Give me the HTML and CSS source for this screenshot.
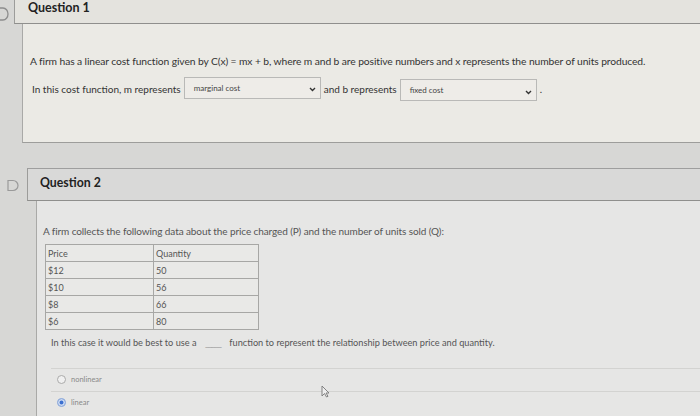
FILE: index.html
```html
<!DOCTYPE html>
<html lang="en">
<head>
<title>Quiz</title>
<meta charset="UTF-8">
<link rel="stylesheet" href="styles.css">
</head>
<body>
  <div class="question q1">
    <div class="flag flag1">
      <svg width="10" height="14" viewBox="0 0 10 14"><path d="M-4 1 H3 A5 6 0 0 1 3 13 H-4" fill="none" stroke="#8d8d8d" stroke-width="1.3"/></svg>
    </div>
    <div class="qbox">
      <div class="qhead">Question 1</div>
      <div class="qbody">
        <p class="qtext">A firm has a linear cost function given by C(x) = mx + b, where m and b are positive numbers and x represents the number of units produced.</p>
        <p class="qline">In this cost function, m represents
          <span class="select sel1">marginal cost
            <svg class="chev" width="7" height="5" viewBox="0 0 7 5"><path d="M1 1 L3.5 3.5 L6 1" fill="none" stroke="#333" stroke-width="1.4"/></svg>
          </span>
          and b represents
          <span class="select sel2">fixed cost
            <svg class="chev" width="7" height="5" viewBox="0 0 7 5"><path d="M1 1 L3.5 3.5 L6 1" fill="none" stroke="#333" stroke-width="1.4"/></svg>
          </span>.
        </p>
      </div>
    </div>
  </div>

  <div class="question q2">
    <div class="flag flag2">
      <svg width="13" height="13" viewBox="0 0 13 13"><path d="M1 1.5 H6 A5 5 0 0 1 6 11.5 H1 Z" fill="none" stroke="#9a9a9a" stroke-width="1.2"/></svg>
    </div>
    <div class="qbox">
      <div class="qhead head2">Question 2</div>
      <div class="qbody body2">
        <p class="qtext2">A firm collects the following data about the price charged (P) and the number of units sold (Q):</p>
        <table class="data">
          <tr><td>Price</td><td>Quantity</td></tr>
          <tr><td>$12</td><td>50</td></tr>
          <tr><td>$10</td><td>56</td></tr>
          <tr><td>$8</td><td>66</td></tr>
          <tr><td>$6</td><td>80</td></tr>
        </table>
        <p class="qtext3">In this case it would be best to use a <span class="blank">_____</span> function to represent the relationship between price and quantity.</p>
        <div class="answers">
          <div class="answer"><span class="radio"></span>nonlinear</div>
          <div class="answer"><span class="radio on"></span>linear</div>
        </div>
        <svg class="cursor" width="9" height="13" viewBox="0 0 9 13"><path d="M1 1 V11 L3.5 8.5 L5.5 12 L7 11.3 L5 8 H8 Z" fill="#eee" stroke="#777" stroke-width="0.9"/></svg>
      </div>
    </div>
  </div>
  <div class="bottom"></div>
</body>
</html>
```

FILE: styles.css
```css
body {
  margin: 0;
  background-color: #d7d7d5;
  font-family: Lato, "Open Sans", Arial, sans-serif;
  width: 700px;
  height: 416px;
  overflow: hidden;
}
p {
  margin: 0;
}
.question {
  display: flex;
}
.flag {
  flex: none;
}
.flag1 {
  width: 14px;
  padding-top: 5px;
}
.q2 {
  margin-top: 25px;
}
.flag2 {
  width: 20px;
  padding-left: 7px;
  padding-top: 8px;
}
.qbox {
  flex: 1;
}
/* header bars */
.qhead {
  height: 23px;
  border-left: 1px solid #9c9c9a;
  border-bottom: 1px solid #8f8f8d;
  background-color: #e4e3de;
  color: #222;
  font-weight: bold;
  font-size: 12.5px;
  padding-left: 13px;
  line-height: 16px;
}
.head2 {
  height: 31px;
  border-top: 1px solid #9e9e9e;
  background-color: #d9d9d8;
  padding-left: 12px;
  line-height: 28px;
  font-size: 12.3px;
}
.qbody {
  margin-left: 8px;
  border-left: 1px solid #a9a9a7;
  border-bottom: 1px solid #9d9d9b;
  background-color: #ebeae5;
  height: 118px;
  color: #333;
}
.qtext {
  padding-top: 31px;
  padding-left: 7px;
  font-size: 10.3px;
  letter-spacing: -0.1px;
}
.qline {
  padding-left: 9px;
  margin-top: 10px;
  font-size: 10px;
  display: flex;
  align-items: center;
  gap: 3px;
  white-space: nowrap;
}
.select {
  display: flex;
  align-items: center;
  justify-content: space-between;
  height: 22px;
  border: 1px solid #b9b9b7;
  background-color: #eeece8;
  font-size: 8px;
  color: #444;
  padding: 0 4px 0 9px;
  margin-top: -3px;
  box-sizing: border-box;
}
.sel1 {
  width: 137px;
}
.sel2 {
  width: 137px;
  margin-top: 2px;
}
.chev {
  margin-top: 4px;
}
/* question 2 */
.body2 {
  position: relative;
  margin-left: 9px;
  height: 220px;
  border-bottom: none;
  background-color: #e6e6e5;
  color: #555;
}
.qtext2 {
  padding-top: 24px;
  padding-left: 6px;
  font-size: 10px;
  letter-spacing: -0.1px;
}
.data {
  margin-top: 7px;
  margin-left: 8px;
  border-collapse: collapse;
  font-size: 9px;
  color: #555;
}
.data td {
  border: 1px solid #a7a7a5;
  height: 16px;
  padding: 0 2px;
  background-color: #e9e9e7;
}
.data td:first-child {
  width: 103px;
}
.data td:last-child {
  width: 100px;
}
.qtext3 {
  margin-top: 7px;
  padding-left: 14px;
  font-size: 9.2px;
}
.blank {
  color: #999;
  letter-spacing: -1px;
  padding: 0 6px;
}
.answers {
  margin-top: 20px;
  margin-left: 14px;
}
.answer {
  display: flex;
  align-items: center;
  height: 20px;
  border-top: 1px solid #d3d3d1;
  padding-left: 6px;
  padding-bottom: 2px;
  font-size: 7.5px;
  color: #8a8a8a;
  gap: 5px;
}
.radio {
  width: 7px;
  height: 7px;
  border: 1px solid #aaa;
  border-radius: 50%;
  background-color: #f0f0f0;
}
.radio.on {
  border-color: #9fb6dd;
  background-color: #3b6fd0;
  box-shadow: inset 0 0 0 1.5px #cfdcf2;
}
.cursor {
  position: absolute;
  left: 284px;
  top: 184px;
}
.bottom {
  height: 4px;
  background-color: #8d8d8d;
}
```
